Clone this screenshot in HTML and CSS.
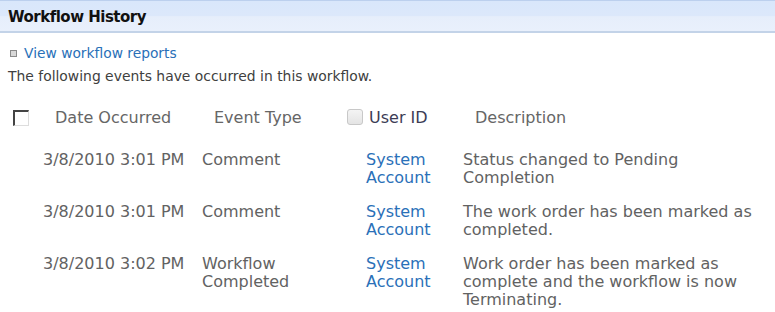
FILE: index.html
```html
<!DOCTYPE html>
<html lang="en">
<head>
    <meta charset="UTF-8">
    <title>Workflow History</title>
    <link rel="stylesheet" href="styles.css">
</head>
<body>

    <div class="title-bar">
        <h2 class="title">Workflow History</h2>
    </div>

    <div class="links">
        <span class="bullet"></span>
        <a href="#" class="report-link">View workflow reports</a>
    </div>
    <p class="intro">The following events have occurred in this workflow.</p>

    <table class="history">
        <colgroup>
            <col class="col-select">
            <col class="col-date">
            <col class="col-type">
            <col class="col-user">
            <col class="col-desc">
        </colgroup>
        <thead>
            <tr>
                <th><span class="select-box"></span></th>
                <th>Date Occurred</th>
                <th>Event Type</th>
                <th class="user-head"><span class="user-box"></span>User ID</th>
                <th>Description</th>
            </tr>
        </thead>
        <tbody>
            <tr>
                <td></td>
                <td>3/8/2010 3:01 PM</td>
                <td>Comment</td>
                <td><a href="#">System Account</a></td>
                <td>Status changed to Pending Completion</td>
            </tr>
            <tr>
                <td></td>
                <td>3/8/2010 3:01 PM</td>
                <td>Comment</td>
                <td><a href="#">System Account</a></td>
                <td>The work order has been marked as completed.</td>
            </tr>
            <tr>
                <td></td>
                <td>3/8/2010 3:02 PM</td>
                <td>Workflow Completed</td>
                <td><a href="#">System Account</a></td>
                <td>Work order has been marked as complete and the workflow is now Terminating.</td>
            </tr>
        </tbody>
    </table>

</body>
</html>
```

FILE: styles.css
```css
body {
    margin: 0;
    font-family: "DejaVu Sans", Verdana, sans-serif;
    color: #626262;
    background: #fff;
}

a {
    color: #2a70b8;
    text-decoration: none;
}

.title-bar {
    height: 30px;
    border-top: 1px solid #bcd0ee;
    border-bottom: 2px solid #c3d3e8;
    background: linear-gradient(to bottom, #d9e7fb 0%, #dce8fb 50%, #e6eefb 52%, #e9f0fc 100%);
    padding-left: 8px;
}

.title {
    margin: 0;
    font-size: 15px;
    font-weight: bold;
    letter-spacing: -0.5px;
    color: #111;
    line-height: 32px;
}

.links {
    display: flex;
    align-items: center;
    gap: 7px;
    margin: 11px 0 0 10px;
    font-size: 13.8px;
    line-height: 18px;
}

.bullet {
    width: 5px;
    height: 5px;
    border: 1px solid #8a8a8a;
    background: #d8d8d8;
}

.intro {
    margin: 5px 0 0 8px;
    font-size: 13.9px;
    line-height: 18px;
    color: #404040;
}

.history {
    margin: 24px 0 0 8px;
    border-collapse: collapse;
    table-layout: fixed;
    font-size: 16px;
    line-height: 18px;
}

.col-select { width: 35px; }
.col-date { width: 159px; }
.col-type { width: 164px; }
.col-user { width: 97px; }
.col-desc { width: 305px; }

.history th {
    font-weight: normal;
    text-align: left;
    padding: 0 0 16px 12px;
    color: #666;
    vertical-align: middle;
}

.history th:first-child {
    padding-left: 5px;
}

.history td {
    padding: 8px 0 8px 0;
    vertical-align: top;
}

.history td:last-child {
    padding-right: 6px;
}

.select-box {
    display: block;
    width: 13px;
    height: 13px;
    border-top: 2px solid #444;
    border-left: 2px solid #444;
    border-right: 1px solid #ddd;
    border-bottom: 1px solid #ddd;
}

.history th.user-head {
    padding-left: 0;
    color: #3c3c55;
    white-space: nowrap;
}

.user-box {
    display: inline-block;
    width: 14px;
    height: 14px;
    margin: 0 6px 0 -19px;
    border: 1px solid #c8c8c8;
    border-radius: 3px;
    background: linear-gradient(to bottom, #f4f4f4, #e4e4e4);
    vertical-align: -2px;
}
```
